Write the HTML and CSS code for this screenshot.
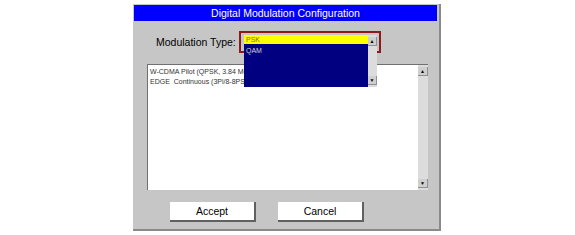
FILE: index.html
```html
<!DOCTYPE html>
<html lang="en">
<head>
    <meta charset="UTF-8">
    <title>Digital Modulation Configuration</title>
    <link rel="stylesheet" href="styles.css">
</head>
<body>

    <div class="dialog">
        <div class="titlebar">Digital Modulation Configuration</div>

        <div class="type-row">
            <span class="type-label">Modulation Type:</span>
            <div class="combo-focus"></div>
        </div>

        <div class="listbox">
            <div class="list-items">
                <div class="list-item">W-CDMA Pilot (QPSK, 3.84 Mcps)</div>
                <div class="list-item">EDGE&nbsp; Continuous (3Pi/8-8PSK)</div>
            </div>
            <div class="scrollbar">
                <div class="arrow">&#9650;</div>
                <div class="arrow">&#9660;</div>
            </div>
        </div>

        <div class="buttons">
            <button class="btn">Accept</button>
            <button class="btn">Cancel</button>
        </div>

        <!-- opened dropdown of the combo -->
        <div class="dropdown">
            <div class="drop-items">
                <div class="drop-item selected">PSK</div>
                <div class="drop-item">QAM</div>
            </div>
            <div class="scrollbar drop-scroll">
                <div class="arrow">&#9650;</div>
                <div class="arrow">&#9660;</div>
            </div>
        </div>
    </div>

</body>
</html>
```

FILE: styles.css
```css
body {
    margin: 0;
    background-color: #fff;
    font-family: "Liberation Sans", Arial, sans-serif;
}

.dialog {
    position: relative;
    box-sizing: border-box;
    width: 308px;
    height: 227px;
    margin: 4px 0 0 133px;
    padding: 1px 2px 0 1px;
    background-color: #c6c6c6;
    border-right: 2px solid #8a8a8a;
    border-bottom: 2px solid #8a8a8a;
    display: flex;
    flex-direction: column;
}

.titlebar {
    height: 16px;
    background-color: #0000ff;
    color: #fff;
    font-size: 10.5px;
    line-height: 16px;
    text-align: center;
}

.type-row {
    display: flex;
    align-items: center;
    height: 22px;
    margin-top: 10px;
    padding-left: 22px;
}

.type-label {
    font-size: 10.5px;
    color: #000;
    width: 83px;
    white-space: nowrap;
}

.combo-focus {
    box-sizing: border-box;
    width: 142px;
    height: 22px;
    border: 2px solid #8b1a1a;
}

.listbox {
    display: flex;
    box-sizing: border-box;
    width: 281px;
    height: 126px;
    margin: 11px 0 0 13px;
    background-color: #fff;
    border-top: 1px solid #707070;
    border-left: 1px solid #707070;
}

.list-items {
    flex: 1;
    padding: 2px 0 0 2px;
}

.list-item {
    font-size: 7px;
    line-height: 10px;
    color: #333;
    white-space: nowrap;
}

.scrollbar {
    width: 10px;
    background-color: #dcdcdc;
    display: flex;
    flex-direction: column;
    justify-content: space-between;
}

.arrow {
    height: 8px;
    margin-bottom: 2px;
    background-color: #cfcfcf;
    border-right: 1px solid #909090;
    border-bottom: 1px solid #909090;
    font-size: 5px;
    line-height: 8px;
    text-align: center;
    color: #000;
}

.arrow:first-child {
    margin: 2px 0 0 0;
}

.buttons {
    display: flex;
    gap: 22px;
    margin: 12px 0 0 36px;
}

.btn {
    width: 86px;
    height: 20px;
    padding: 0;
    background-color: #fff;
    border: none;
    border-right: 2px solid #606060;
    border-bottom: 2px solid #606060;
    font-family: "Liberation Sans", Arial, sans-serif;
    font-size: 10.5px;
    color: #000;
}

.dropdown {
    position: absolute;
    left: 111px;
    top: 31px;
    width: 133px;
    height: 52px;
    display: flex;
}

.drop-items {
    flex: 1;
    background-color: #000080;
}

.drop-item {
    height: 9px;
    padding-left: 2px;
    font-size: 7px;
    line-height: 9px;
    color: #d0d0d0;
    margin-bottom: 2px;
}

.drop-item.selected {
    background-color: #ffff00;
    color: #8b6b00;
}

.drop-scroll {
    width: 9px;
}
```
